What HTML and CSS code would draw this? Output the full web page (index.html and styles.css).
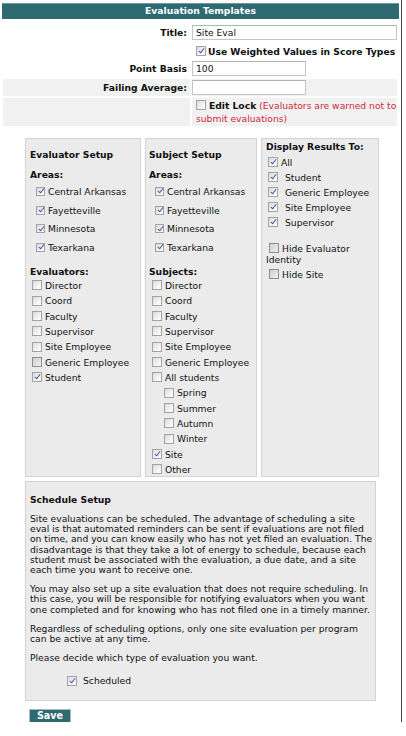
FILE: index.html
```html
<!DOCTYPE html>
<html>
<head>
<meta charset="utf-8">
<title>Evaluation Templates</title>
<link rel="stylesheet" href="styles.css">
</head>
<body>
<div class="page">
  <div class="header">Evaluation Templates</div>

  <div class="form">
    <div class="lbl">Title:</div>
    <div class="val"><div class="inp wide">Site Eval</div></div>

    <div class="lbl"></div>
    <div class="val chk-line"><span class="cb on"></span><b class="nowrap">Use Weighted Values in Score Types</b></div>

    <div class="lbl">Point Basis</div>
    <div class="val"><div class="inp short">100</div></div>

    <div class="lbl shade">Failing Average:</div>
    <div class="val shade"><div class="inp short"></div></div>

    <div class="lbl shade"></div>
    <div class="val shade lock"><span class="cb"></span> <b>Edit Lock</b> <span class="warn">(Evaluators are warned not to</span><br><span class="warn">submit evaluations)</span></div>
  </div>

  <div class="panels">
    <div class="box b1">
      <div class="bh">Evaluator Setup</div>
      <div class="bh sub">Areas:</div>
      <div class="areas">
        <div class="item"><span class="cb sm on"></span>Central Arkansas</div>
        <div class="item"><span class="cb sm on"></span>Fayetteville</div>
        <div class="item"><span class="cb sm on"></span>Minnesota</div>
        <div class="item"><span class="cb sm on"></span>Texarkana</div>
      </div>
      <div class="bh sub2">Evaluators:</div>
      <div class="list">
        <div class="item"><span class="cb"></span>Director</div>
        <div class="item"><span class="cb"></span>Coord</div>
        <div class="item"><span class="cb"></span>Faculty</div>
        <div class="item"><span class="cb"></span>Supervisor</div>
        <div class="item"><span class="cb"></span>Site Employee</div>
        <div class="item"><span class="cb dim"></span>Generic Employee</div>
        <div class="item"><span class="cb on"></span>Student</div>
      </div>
    </div>

    <div class="box b2">
      <div class="bh">Subject Setup</div>
      <div class="bh sub">Areas:</div>
      <div class="areas">
        <div class="item"><span class="cb sm on"></span>Central Arkansas</div>
        <div class="item"><span class="cb sm on"></span>Fayetteville</div>
        <div class="item"><span class="cb sm on"></span>Minnesota</div>
        <div class="item"><span class="cb sm on"></span>Texarkana</div>
      </div>
      <div class="bh sub2">Subjects:</div>
      <div class="list">
        <div class="item"><span class="cb"></span>Director</div>
        <div class="item"><span class="cb"></span>Coord</div>
        <div class="item"><span class="cb"></span>Faculty</div>
        <div class="item"><span class="cb"></span>Supervisor</div>
        <div class="item"><span class="cb"></span>Site Employee</div>
        <div class="item"><span class="cb"></span>Generic Employee</div>
        <div class="item"><span class="cb"></span>All students</div>
        <div class="item nested"><span class="cb"></span>Spring</div>
        <div class="item nested"><span class="cb"></span>Summer</div>
        <div class="item nested"><span class="cb"></span>Autumn</div>
        <div class="item nested"><span class="cb"></span>Winter</div>
        <div class="item"><span class="cb on"></span>Site</div>
        <div class="item"><span class="cb"></span>Other</div>
      </div>
    </div>

    <div class="box b3">
      <div class="bh">Display Results To:</div>
      <div class="list">
        <div class="item"><span class="cb on"></span>All</div>
        <div class="item"><span class="cb on"></span><span class="sp">Student</span></div>
        <div class="item"><span class="cb on"></span><span class="sp">Generic Employee</span></div>
        <div class="item"><span class="cb on"></span><span class="sp">Site Employee</span></div>
        <div class="item"><span class="cb on"></span><span class="sp">Supervisor</span></div>
      </div>
      <div class="wrapitem first"><span class="cb inl dim"></span>Hide Evaluator Identity</div>
      <div class="wrapitem"><span class="cb inl dim"></span>Hide Site</div>
    </div>
  </div>

  <div class="sched">
    <div class="bh">Schedule Setup</div>
    <p>Site evaluations can be scheduled. The advantage of scheduling a site eval is that automated reminders can be sent if evaluations are not filed on time, and you can know easily who has not yet filed an evaluation. The disadvantage is that they take a lot of energy to schedule, because each student must be associated with the evaluation, a due date, and a site each time you want to receive one.</p>
    <p>You may also set up a site evaluation that does not require scheduling. In this case, you will be responsible for notifying evaluators when you want one completed and for knowing who has not filed one in a timely manner.</p>
    <p>Regardless of scheduling options, only one site evaluation per program can be active at any time.</p>
    <p>Please decide which type of evaluation you want.</p>
    <div class="sched-opt"><span class="cb on"></span>Scheduled</div>
  </div>

  <div class="actions"><span class="btn">Save</span></div>
</div>
</body>
</html>
```

FILE: styles.css
```css
* { box-sizing: border-box; }

body {
  margin: 0;
  background: #fff;
  color: #111;
  font-family: "DejaVu Sans", Verdana, sans-serif;
  font-size: 9.2px;
}

.page {
  margin-left: 2px;
  width: 400px;
  height: 722px;
  padding-top: 3px;
  padding-right: 2px;
  border-right: 1px solid #474747;
}

.header {
  height: 16px;
  background: #2e6a72;
  border-top: 1px solid #6f989d;
  color: #fff;
  font-weight: bold;
  text-align: center;
  line-height: 14px;
}

/* form table */
.form {
  display: grid;
  grid-template-columns: 187px 205px;
  grid-template-rows: 20px 14px 17px 17px 28px;
  column-gap: 2px;
  row-gap: 2px;
  margin: 3px 0 0 1px;
}

.lbl {
  display: flex;
  align-items: center;
  justify-content: flex-end;
  padding-right: 3px;
  font-weight: bold;
}

.val {
  display: flex;
  align-items: center;
}

.shade { background: #f1f1f1; }

.inp {
  height: 15px;
  border: 1px solid #c4c4c4;
  border-top-color: #b4b4b4;
  background: #fff;
  padding: 0 3px;
  line-height: 13px;
}
.inp.wide { width: 205px; }
.inp.short { width: 114px; }

.chk-line { padding-left: 4px; gap: 2px; }
.nowrap { white-space: nowrap; }

.lock {
  display: block;
  padding: 1px 0 0 4px;
  line-height: 13px;
}
.lock .cb { vertical-align: -1px; }
.warn { color: #d0283c; }

/* checkbox */
.cb {
  display: inline-block;
  flex: none;
  position: relative;
  width: 10px;
  height: 10px;
  border: 1px solid #a3a3a3;
  background: linear-gradient(135deg, #d9d9d9, #f7f7f7 70%, #ffffff);
}
.cb.sm { width: 9px; height: 9px; }
.cb.dim { border-color: #8e8e8e; background: linear-gradient(135deg, #cfcfcf, #efefef); }
.cb.on::after {
  content: "";
  position: absolute;
  left: 3px;
  top: 0;
  width: 2px;
  height: 5px;
  border: solid #3a4ea6;
  border-width: 0 1.5px 1.5px 0;
  transform: rotate(38deg);
}
.cb.sm.on::after { left: 2.5px; top: -0.5px; }

/* panels */
.panels {
  display: flex;
  gap: 4px;
  height: 339px;
  margin: 12px 0 0 23px;
}

.box {
  background: #ebebeb;
  border: 1px solid #d3d3d3;
}
.b1 { width: 116px; padding: 10px 0 0 4px; }
.b2 { width: 112px; padding: 10px 0 0 3px; }
.b3 { width: 118px; padding: 2px 0 0 4px; }

.bh { font-weight: bold; line-height: 12px; }
.bh.sub { margin-top: 8px; }
.bh.sub2 { margin-top: 9px; }

.item {
  display: flex;
  align-items: center;
  gap: 3px;
  white-space: nowrap;
}

.areas { margin-top: 1px; }
.areas .item { height: 18.7px; }
.b1 .areas .item { padding-left: 6px; }
.b2 .areas .item { padding-left: 6px; }

.list .item { height: 15.33px; }
.b1 .list .item { padding-left: 2px; }
.b2 .list .item { padding-left: 3px; }
.b2 .list .item.nested { padding-left: 15px; }

.b3 .list { margin-top: 1.5px; }
.b3 .list .item { height: 15px; padding-left: 2px; }
.sp { padding-left: 4px; }

.wrapitem {
  line-height: 11px;
  margin-top: 4px;
}
.wrapitem.first { margin-top: 13px; }
.cb.inl { vertical-align: -1px; margin: 0 3px 0 3px; }

/* schedule */
.sched {
  width: 351px;
  height: 220px;
  margin: 4px 0 0 23px;
  padding: 12px 2px 0 4px;
  background: #ebebeb;
  border: 1px solid #d3d3d3;
}
.sched p {
  margin: 9px 0 0;
  line-height: 10.2px;
}
.sched .bh + p { margin-top: 8px; }

.sched-opt {
  display: flex;
  align-items: center;
  gap: 6px;
  margin: 12px 0 0 37px;
}

.actions { margin: 8px 0 0 27px; }
.btn {
  display: inline-block;
  width: 42px;
  height: 14px;
  background: #2e6a72;
  border: 1px solid #a9b9bb;
  color: #fff;
  font-weight: bold;
  font-size: 9.6px;
  text-align: center;
  line-height: 12px;
}
```
